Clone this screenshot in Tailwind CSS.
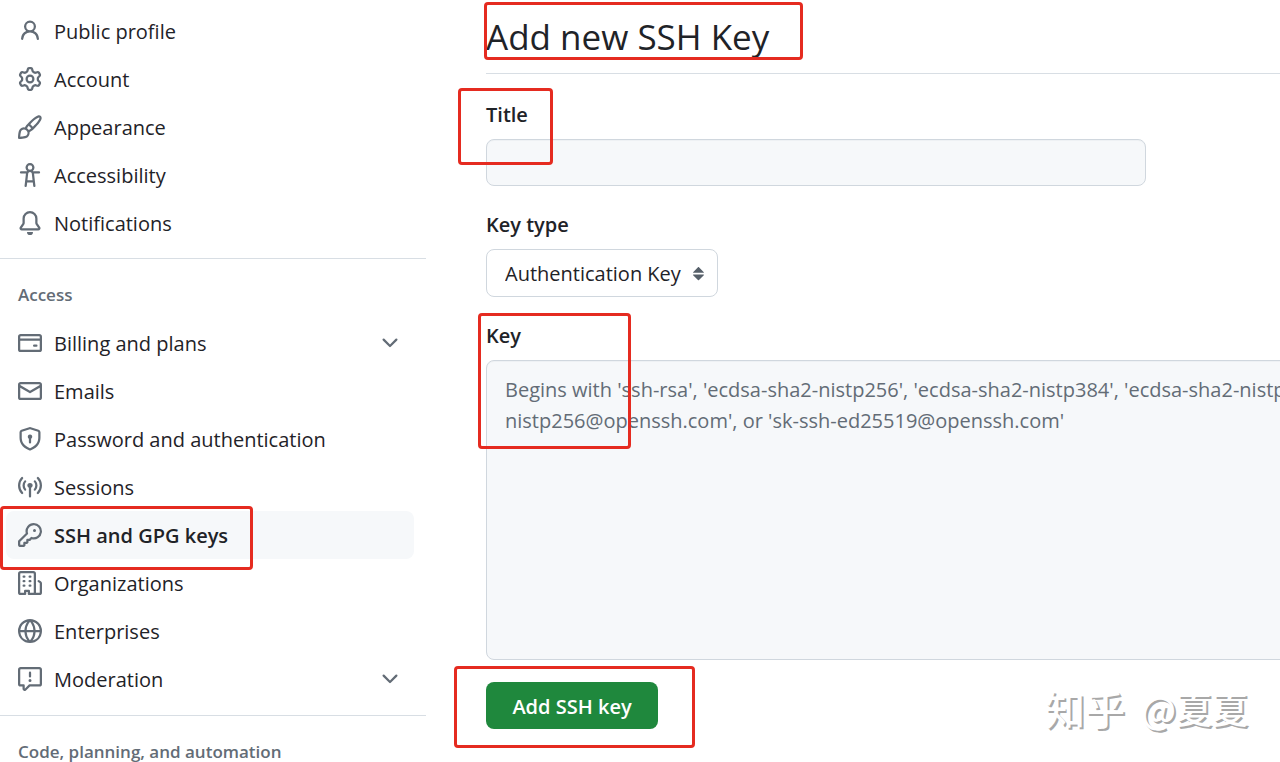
<!DOCTYPE html>
<html lang="en">
<head>
  <meta charset="UTF-8">
  <meta name="viewport" content="width=device-width, initial-scale=1.0">
  <title>Add new SSH Key</title>
  <script src="https://cdn.jsdelivr.net/npm/@tailwindcss/browser@4"></script>
</head>
<body class="bg-white font-['Open_Sans','Noto_Sans',sans-serif] text-[20px] leading-[30px] text-[#1f2328]">
  <div class="relative flex overflow-hidden">

    <!-- Settings sidebar -->
    <nav class="w-[426px] shrink-0 pt-[7px]" aria-label="Settings">
      <ul class="pl-1.5 pr-3">
        <li>
          <a href="#" class="flex h-12 items-center gap-3 rounded-lg px-3">
            <svg class="size-6 shrink-0 fill-[#636c76]" viewBox="0 0 16 16"><path d="M10.561 8.073a6.005 6.005 0 0 1 3.432 5.142.75.75 0 1 1-1.498.07 4.5 4.5 0 0 0-8.99 0 .75.75 0 0 1-1.498-.07 6.004 6.004 0 0 1 3.431-5.142 3.999 3.999 0 1 1 5.123 0ZM10.5 5a2.5 2.5 0 1 0-5 0 2.5 2.5 0 0 0 5 0Z"/></svg>
            <span class="pt-0.5">Public profile</span>
          </a>
        </li>
        <li>
          <a href="#" class="flex h-12 items-center gap-3 rounded-lg px-3">
            <svg class="size-6 shrink-0 fill-[#636c76]" viewBox="0 0 16 16"><path d="M8 0a8.2 8.2 0 0 1 .701.031C9.444.095 9.99.645 10.16 1.29l.288 1.107c.018.066.079.158.212.224.231.114.454.243.668.386.123.082.233.09.299.071l1.103-.303c.644-.176 1.392.021 1.82.63.27.385.506.792.704 1.218.315.675.111 1.422-.364 1.891l-.814.806c-.049.048-.098.147-.088.294.016.257.016.515 0 .772-.01.147.038.246.088.294l.814.806c.475.469.679 1.216.364 1.891a7.977 7.977 0 0 1-.704 1.217c-.428.61-1.176.807-1.82.63l-1.102-.302c-.067-.019-.177-.011-.3.071a5.909 5.909 0 0 1-.668.386c-.133.066-.194.158-.211.224l-.29 1.106c-.168.646-.715 1.196-1.458 1.26a8.006 8.006 0 0 1-1.402 0c-.743-.064-1.289-.614-1.458-1.26l-.289-1.106c-.018-.066-.079-.158-.212-.224a5.738 5.738 0 0 1-.668-.386c-.123-.082-.233-.09-.299-.071l-1.103.303c-.644.176-1.392-.021-1.82-.63a8.12 8.12 0 0 1-.704-1.218c-.315-.675-.111-1.422.363-1.891l.815-.806c.05-.048.098-.147.088-.294a6.214 6.214 0 0 1 0-.772c.01-.147-.038-.246-.088-.294l-.815-.806C.635 6.045.431 5.298.746 4.623a7.92 7.92 0 0 1 .704-1.217c.428-.61 1.176-.807 1.82-.63l1.102.302c.067.019.177.011.3-.071.214-.143.437-.272.668-.386.133-.066.194-.158.211-.224l.29-1.106C6.009.645 6.556.095 7.299.03 7.53.01 7.764 0 8 0Zm-.571 1.525c-.036.003-.108.036-.137.146l-.289 1.105c-.147.561-.549.967-.998 1.189-.173.086-.34.183-.5.29-.417.278-.97.423-1.529.27l-1.103-.303c-.109-.03-.175.016-.195.045-.22.312-.412.644-.573.99-.014.031-.021.11.059.19l.815.806c.411.406.562.957.53 1.456a4.709 4.709 0 0 0 0 .582c.032.499-.119 1.05-.53 1.456l-.815.806c-.081.08-.073.159-.059.19.162.346.353.677.573.989.02.03.085.076.195.046l1.102-.303c.56-.153 1.113-.008 1.53.27.161.107.328.204.501.29.447.222.85.629.997 1.189l.289 1.105c.029.109.101.143.137.146a6.6 6.6 0 0 0 1.142 0c.036-.003.108-.036.137-.146l.289-1.105c.147-.561.549-.967.998-1.189.173-.086.34-.183.5-.29.417-.278.97-.423 1.529-.27l1.103.303c.109.029.175-.016.195-.045.22-.313.411-.644.573-.99.014-.031.021-.11-.059-.19l-.815-.806c-.411-.406-.562-.957-.53-1.456a4.709 4.709 0 0 0 0-.582c-.032-.499.119-1.05.53-1.456l.815-.806c.081-.08.073-.159.059-.19a6.464 6.464 0 0 0-.573-.989c-.02-.03-.085-.076-.195-.046l-1.102.303c-.56.153-1.113.008-1.53-.27a4.44 4.44 0 0 0-.501-.29c-.447-.222-.85-.629-.997-1.189l-.289-1.105c-.029-.11-.101-.143-.137-.146a6.6 6.6 0 0 0-1.142 0ZM11 8a3 3 0 1 1-6 0 3 3 0 0 1 6 0ZM9.5 8a1.5 1.5 0 1 0-3.001.001A1.5 1.5 0 0 0 9.5 8Z"/></svg>
            <span class="pt-0.5">Account</span>
          </a>
        </li>
        <li>
          <a href="#" class="flex h-12 items-center gap-3 rounded-lg px-3">
            <svg class="size-6 shrink-0 fill-[#636c76]" viewBox="0 0 16 16"><path d="M11.134 1.535c.7-.509 1.416-.942 2.076-1.155.649-.21 1.463-.267 2.069.34.603.601.568 1.411.368 2.07-.202.668-.624 1.39-1.125 2.096-1.011 1.424-2.496 2.987-3.775 4.249-1.098 1.084-2.132 1.839-3.04 2.3a3.744 3.744 0 0 1-1.055 3.217c-.431.431-1.065.691-1.657.861-.614.177-1.294.287-1.914.357A21.151 21.151 0 0 1 .797 16H.743l.007-.75H.749L.742 16a.75.75 0 0 1-.743-.742l.743-.008-.742.007v-.054a21.25 21.25 0 0 1 .13-2.284c.067-.647.187-1.287.358-1.914.17-.591.43-1.226.86-1.657a3.746 3.746 0 0 1 3.227-1.054c.466-.893 1.225-1.907 2.314-2.982 1.271-1.255 2.833-2.75 4.246-3.777ZM1.62 13.089c-.051.464-.086.929-.104 1.395.466-.018.932-.053 1.396-.104a10.511 10.511 0 0 0 1.668-.309c.526-.151.856-.325 1.011-.48a2.25 2.25 0 1 0-3.182-3.182c-.155.155-.329.485-.48 1.01a10.515 10.515 0 0 0-.309 1.67Zm10.396-10.34c-1.224.89-2.605 2.189-3.822 3.384l1.718 1.718c1.21-1.205 2.51-2.597 3.387-3.833.47-.662.78-1.227.912-1.662.134-.444.032-.551.009-.575h-.001V1.78c-.014-.014-.113-.113-.548.027-.432.14-.995.462-1.655.942Zm-4.832 7.266-.001.001a9.859 9.859 0 0 0 1.63-1.142L7.155 7.216a9.7 9.7 0 0 0-1.161 1.607c.482.302.889.71 1.19 1.192Z"/></svg>
            <span class="pt-0.5">Appearance</span>
          </a>
        </li>
        <li>
          <a href="#" class="flex h-12 items-center gap-3 rounded-lg px-3">
            <svg class="size-6 shrink-0 fill-[#636c76]" viewBox="0 0 16 16"><path d="M9.923 5.302c.063.063.122.129.178.198H14A.75.75 0 0 1 14 7h-3.3l.578 5.163.362 2.997a.75.75 0 0 1-1.49.18L9.868 13H6.132l-.282 2.34a.75.75 0 0 1-1.49-.18l.362-2.997L5.3 7H2a.75.75 0 0 1 0-1.5h3.9a2.54 2.54 0 0 1 .176-.198 3 3 0 1 1 3.847 0ZM9.2 7.073h-.001a1.206 1.206 0 0 0-2.398 0L6.305 11.5h3.39ZM9.5 3a1.5 1.5 0 1 0-3.001.001A1.5 1.5 0 0 0 9.5 3Z"/></svg>
            <span class="pt-0.5">Accessibility</span>
          </a>
        </li>
        <li>
          <a href="#" class="flex h-12 items-center gap-3 rounded-lg px-3">
            <svg class="size-6 shrink-0 fill-[#636c76]" viewBox="0 0 16 16"><path d="M8 16a2 2 0 0 0 1.985-1.75c.017-.137-.097-.25-.235-.25h-3.5c-.138 0-.252.113-.235.25A2 2 0 0 0 8 16ZM3 5a5 5 0 0 1 10 0v2.947c0 .05.015.098.042.139l1.703 2.555A1.519 1.519 0 0 1 13.482 13H2.518a1.516 1.516 0 0 1-1.263-2.36l1.703-2.554A.255.255 0 0 0 3 7.947Zm5-3.5A3.5 3.5 0 0 0 4.5 5v2.947c0 .346-.102.683-.294.97l-1.703 2.556a.017.017 0 0 0-.003.01l.001.006c0 .002.002.004.004.006l.006.004.007.001h10.964l.007-.001.006-.004.004-.006.001-.007a.017.017 0 0 0-.003-.01l-1.703-2.554a1.745 1.745 0 0 1-.294-.97V5A3.5 3.5 0 0 0 8 1.5Z"/></svg>
            <span class="pt-0.5">Notifications</span>
          </a>
        </li>
      </ul>

      <hr class="mt-[11px] border-[#d8dee4]">

      <h2 class="px-[18px] pt-6 pb-3 text-[17px] leading-6 font-semibold text-[#636c76]">Access</h2>
      <ul class="pl-1.5 pr-3">
        <li>
          <button type="button" class="flex h-12 w-full items-center gap-3 rounded-lg px-3 text-left">
            <svg class="size-6 shrink-0 fill-[#636c76]" viewBox="0 0 16 16"><path d="M10.75 9a.75.75 0 0 0 0 1.5h1.5a.75.75 0 0 0 0-1.5h-1.5Z"/><path d="M0 3.75C0 2.784.784 2 1.75 2h12.5c.966 0 1.75.784 1.75 1.75v8.5A1.75 1.75 0 0 1 14.25 14H1.75A1.75 1.75 0 0 1 0 12.25ZM14.5 6.5h-13v5.75c0 .138.112.25.25.25h12.5a.25.25 0 0 0 .25-.25Zm0-2.75a.25.25 0 0 0-.25-.25H1.75a.25.25 0 0 0-.25.25V5h13Z"/></svg>
            <span class="grow pt-0.5">Billing and plans</span>
            <svg class="size-6 shrink-0 fill-[#636c76]" viewBox="0 0 16 16"><path d="M12.78 5.22a.749.749 0 0 1 0 1.06l-4.25 4.25a.749.749 0 0 1-1.06 0L3.22 6.28a.749.749 0 1 1 1.06-1.06L8 8.939l3.72-3.719a.749.749 0 0 1 1.06 0Z"/></svg>
          </button>
        </li>
        <li>
          <a href="#" class="flex h-12 items-center gap-3 rounded-lg px-3">
            <svg class="size-6 shrink-0 fill-[#636c76]" viewBox="0 0 16 16"><path d="M1.75 2h12.5c.966 0 1.75.784 1.75 1.75v8.5A1.75 1.75 0 0 1 14.25 14H1.75A1.75 1.75 0 0 1 0 12.25v-8.5C0 2.784.784 2 1.75 2ZM1.5 12.251c0 .138.112.25.25.25h12.5a.25.25 0 0 0 .25-.25V5.809L8.38 9.397a.75.75 0 0 1-.76 0L1.5 5.809v6.442Zm13-8.181v-.32a.25.25 0 0 0-.25-.25H1.75a.25.25 0 0 0-.25.25v.32L8 7.88Z"/></svg>
            <span class="pt-0.5">Emails</span>
          </a>
        </li>
        <li>
          <a href="#" class="flex h-12 items-center gap-3 rounded-lg px-3">
            <svg class="size-6 shrink-0 fill-[#636c76]" viewBox="0 0 16 16"><path d="m8.533.133 5.25 1.68A1.75 1.75 0 0 1 15 3.48V7c0 1.566-.32 3.182-1.303 4.682-.983 1.498-2.585 2.813-5.032 3.855a1.697 1.697 0 0 1-1.33 0c-2.447-1.042-4.049-2.357-5.032-3.855C1.32 10.182 1 8.566 1 7V3.48a1.755 1.755 0 0 1 1.217-1.667l5.25-1.68a1.748 1.748 0 0 1 1.066 0Zm-.61 1.429.001.001-5.25 1.68a.251.251 0 0 0-.174.237V7c0 1.36.275 2.666 1.057 3.859.784 1.194 2.121 2.342 4.366 3.298a.196.196 0 0 0 .154 0c2.245-.957 3.582-2.103 4.366-3.297C13.225 9.666 13.5 8.358 13.5 7V3.48a.25.25 0 0 0-.174-.238l-5.25-1.68a.25.25 0 0 0-.153 0ZM9.5 6.5c0 .536-.286 1.032-.75 1.3v2.45a.75.75 0 0 1-1.5 0V7.8A1.5 1.5 0 1 1 9.5 6.5Z"/></svg>
            <span class="pt-0.5">Password and authentication</span>
          </a>
        </li>
        <li>
          <a href="#" class="flex h-12 items-center gap-3 rounded-lg px-3">
            <svg class="size-6 shrink-0 fill-[#636c76]" viewBox="0 0 16 16"><path d="M8.75 8.582v5.668a.75.75 0 0 1-1.5 0V8.582a1.75 1.75 0 1 1 1.5 0Zm3.983-7.125a.75.75 0 0 1 1.06.026A7.976 7.976 0 0 1 16 7c0 2.139-.84 4.083-2.207 5.517a.75.75 0 1 1-1.086-1.034A6.474 6.474 0 0 0 14.5 7a6.474 6.474 0 0 0-1.793-4.483.75.75 0 0 1 .026-1.06Zm-9.466 0c.3.286.312.76.026 1.06A6.474 6.474 0 0 0 1.5 7a6.47 6.47 0 0 0 1.793 4.483.75.75 0 0 1-1.086 1.034A7.973 7.973 0 0 1 0 7c0-2.139.84-4.083 2.207-5.517a.75.75 0 0 1 1.06-.026Zm8.556 2.321A4.988 4.988 0 0 1 13 7a4.988 4.988 0 0 1-1.177 3.222.75.75 0 1 1-1.146-.967A3.487 3.487 0 0 0 11.5 7c0-.86-.309-1.645-.823-2.255a.75.75 0 0 1 1.146-.967Zm-6.492.958A3.48 3.48 0 0 0 4.5 7a3.48 3.48 0 0 0 .823 2.255.75.75 0 0 1-1.146.967A4.981 4.981 0 0 1 3 7a4.982 4.982 0 0 1 1.188-3.236.75.75 0 1 1 1.143.972Z"/></svg>
            <span class="pt-0.5">Sessions</span>
          </a>
        </li>
        <li class="relative">
          <a href="#" aria-current="page" class="flex h-12 items-center gap-3 rounded-lg bg-[#f6f8fa] px-3 font-semibold">
            <svg class="size-6 shrink-0 fill-[#636c76]" viewBox="0 0 16 16"><path d="M10.5 0a5.499 5.499 0 1 1-1.288 10.848l-.932.932a.749.749 0 0 1-.53.22H7v.75a.749.749 0 0 1-.22.53l-.5.5a.749.749 0 0 1-.53.22H5v.75a.749.749 0 0 1-.22.53l-.5.5a.749.749 0 0 1-.53.22h-2A1.75 1.75 0 0 1 0 14.25v-2c0-.199.079-.389.22-.53l4.932-4.932A5.5 5.5 0 0 1 10.5 0Zm-4 5.5c-.001.431.069.86.205 1.269a.75.75 0 0 1-.181.768L1.5 12.56v1.69c0 .138.112.25.25.25h1.69l.06-.06v-1.19a.75.75 0 0 1 .75-.75h1.19l.06-.06v-1.19a.75.75 0 0 1 .75-.75h1.19l1.023-1.025a.75.75 0 0 1 .768-.18A4 4 0 1 0 6.5 5.5ZM11 6a1 1 0 1 1 0-2 1 1 0 0 1 0 2Z"/></svg>
            <span class="pt-0.5">SSH and GPG keys</span>
          </a>
          <div class="pointer-events-none absolute -top-[5px] -left-1.5 z-10 h-16 w-[253px] rounded-sm border-3 border-[#e52b20]"></div>
        </li>
        <li>
          <a href="#" class="flex h-12 items-center gap-3 rounded-lg px-3">
            <svg class="size-6 shrink-0 fill-[#636c76]" viewBox="0 0 16 16"><path d="M1.75 16A1.75 1.75 0 0 1 0 14.25V1.75C0 .784.784 0 1.75 0h8.5C11.216 0 12 .784 12 1.75v12.5c0 .085-.006.168-.018.25h2.268a.25.25 0 0 0 .25-.25V8.285a.25.25 0 0 0-.111-.208l-1.055-.703a.749.749 0 1 1 .832-1.248l1.055.703c.487.325.779.871.779 1.456v5.965A1.75 1.75 0 0 1 14.25 16h-3.5a.766.766 0 0 1-.197-.026c-.099.017-.2.026-.303.026h-3a.75.75 0 0 1-.75-.75V14h-1v1.25a.75.75 0 0 1-.75.75Zm-.25-1.75c0 .138.112.25.25.25H4v-1.25a.75.75 0 0 1 .75-.75h2.5a.75.75 0 0 1 .75.75v1.25h2.25a.25.25 0 0 0 .25-.25V1.75a.25.25 0 0 0-.25-.25h-8.5a.25.25 0 0 0-.25.25ZM3.75 6h.5a.75.75 0 0 1 0 1.5h-.5a.75.75 0 0 1 0-1.5ZM3 3.75A.75.75 0 0 1 3.75 3h.5a.75.75 0 0 1 0 1.5h-.5A.75.75 0 0 1 3 3.75Zm4 3A.75.75 0 0 1 7.75 6h.5a.75.75 0 0 1 0 1.5h-.5A.75.75 0 0 1 7 6.75ZM7.75 3h.5a.75.75 0 0 1 0 1.5h-.5a.75.75 0 0 1 0-1.5ZM3 9.75A.75.75 0 0 1 3.75 9h.5a.75.75 0 0 1 0 1.5h-.5A.75.75 0 0 1 3 9.75ZM7.75 9h.5a.75.75 0 0 1 0 1.5h-.5a.75.75 0 0 1 0-1.5Z"/></svg>
            <span class="pt-0.5">Organizations</span>
          </a>
        </li>
        <li>
          <a href="#" class="flex h-12 items-center gap-3 rounded-lg px-3">
            <svg class="size-6 shrink-0 fill-[#636c76]" viewBox="0 0 16 16"><path d="M8 0a8 8 0 1 1 0 16A8 8 0 0 1 8 0ZM5.78 8.75a9.64 9.64 0 0 0 1.363 4.177c.255.426.542.832.857 1.215.245-.296.551-.705.857-1.215A9.64 9.64 0 0 0 10.22 8.75Zm4.44-1.5a9.64 9.64 0 0 0-1.363-4.177c-.307-.51-.612-.919-.857-1.215a9.927 9.927 0 0 0-.857 1.215A9.64 9.64 0 0 0 5.78 7.25Zm-5.944 1.5H1.543a6.507 6.507 0 0 0 4.666 5.5c-.123-.181-.24-.365-.352-.552-.715-1.192-1.437-2.874-1.581-4.948Zm-2.733-1.5h2.733c.144-2.074.866-3.756 1.58-4.948.12-.197.237-.381.353-.552a6.507 6.507 0 0 0-4.666 5.5Zm10.181 1.5c-.144 2.074-.866 3.756-1.58 4.948-.12.197-.237.381-.353.552a6.507 6.507 0 0 0 4.666-5.5Zm2.733-1.5a6.507 6.507 0 0 0-4.666-5.5c.123.181.24.365.353.552.714 1.192 1.436 2.874 1.58 4.948Z"/></svg>
            <span class="pt-0.5">Enterprises</span>
          </a>
        </li>
        <li>
          <button type="button" class="flex h-12 w-full items-center gap-3 rounded-lg px-3 text-left">
            <svg class="size-6 shrink-0 fill-[#636c76]" viewBox="0 0 16 16"><path d="M0 1.75C0 .784.784 0 1.75 0h12.5C15.216 0 16 .784 16 1.75v9.5A1.75 1.75 0 0 1 14.25 13H8.06l-2.573 2.573A1.458 1.458 0 0 1 3 14.543V13H1.75A1.75 1.75 0 0 1 0 11.25Zm1.75-.25a.25.25 0 0 0-.25.25v9.5c0 .138.112.25.25.25h2a.75.75 0 0 1 .75.75v2.19l2.72-2.72a.749.749 0 0 1 .53-.22h6.5a.25.25 0 0 0 .25-.25v-9.5a.25.25 0 0 0-.25-.25Zm7 2.25v2.5a.75.75 0 0 1-1.5 0v-2.5a.75.75 0 0 1 1.5 0ZM9 9a1 1 0 1 1-2 0 1 1 0 0 1 2 0Z"/></svg>
            <span class="grow pt-0.5">Moderation</span>
            <svg class="size-6 shrink-0 fill-[#636c76]" viewBox="0 0 16 16"><path d="M12.78 5.22a.749.749 0 0 1 0 1.06l-4.25 4.25a.749.749 0 0 1-1.06 0L3.22 6.28a.749.749 0 1 1 1.06-1.06L8 8.939l3.72-3.719a.749.749 0 0 1 1.06 0Z"/></svg>
          </button>
        </li>
      </ul>

      <hr class="mt-3 border-[#d8dee4]">

      <h2 class="px-[18px] pt-6 text-[17px] leading-6 font-semibold text-[#636c76]">Code, planning, and automation</h2>
    </nav>

    <!-- New key form -->
    <main class="min-w-0 grow pl-[60px]">
      <div class="relative border-b border-[#d8dee4] py-3">
        <h1 class="text-[35px] leading-[49px]">Add new SSH Key</h1>
        <div class="pointer-events-none absolute top-[2px] -left-[2px] h-[58px] w-[319px] rounded-sm border-3 border-[#e52b20]"></div>
      </div>

      <form class="pt-[26px]">
        <div class="relative">
          <label for="key-title" class="block font-semibold">Title</label>
          <input id="key-title" type="text" class="mt-[9px] block h-[47px] w-[660px] rounded-lg border border-[#d0d7de] bg-[#f6f8fa] px-[18px] shadow-[inset_0_1px_0_rgba(208,215,222,0.2)]">
          <div class="pointer-events-none absolute -top-3 -left-7 h-[77px] w-[95px] rounded-sm border-3 border-[#e52b20]"></div>
        </div>

        <div class="mt-6">
          <label for="key-type" class="block font-semibold">Key type</label>
          <div class="relative mt-[9px] w-[232px]">
            <select id="key-type" class="block h-12 w-full appearance-none rounded-lg border border-[#d0d7de] bg-white pt-0.5 pl-[18px]">
              <option>Authentication Key</option>
              <option>Signing Key</option>
            </select>
            <svg class="pointer-events-none absolute top-3 right-[7px] size-6 fill-[#57606a]" viewBox="0 0 16 16"><path d="m4.074 9.427 3.396 3.396a.25.25 0 0 0 .354 0l3.396-3.396A.25.25 0 0 0 11.043 9H4.251a.25.25 0 0 0-.177.427ZM4.074 7.47 7.47 4.073a.25.25 0 0 1 .354 0L11.22 7.47a.25.25 0 0 1-.177.426H4.251a.25.25 0 0 1-.177-.426Z"/></svg>
          </div>
        </div>

        <div class="relative mt-6">
          <label for="key-body" class="block font-semibold">Key</label>
          <textarea id="key-body" class="mt-[9px] block h-[300px] w-[1176px] resize-none rounded-lg border border-[#d0d7de] bg-[#f6f8fa] px-[18px] py-[13px] leading-[31px] shadow-[inset_0_1px_0_rgba(208,215,222,0.2)] placeholder:text-[#636c76]" placeholder="Begins with 'ssh-rsa', 'ecdsa-sha2-nistp256', 'ecdsa-sha2-nistp384', 'ecdsa-sha2-nistp521', 'ssh-ed25519', 'sk-ecdsa-sha2-nistp256@openssh.com', or 'sk-ssh-ed25519@openssh.com'"></textarea>
          <div class="pointer-events-none absolute -top-2 -left-2 h-[136px] w-[153px] rounded-sm border-3 border-[#e52b20]"></div>
        </div>

        <div class="relative mt-[22px]">
          <button type="submit" class="block h-[47px] w-[172px] rounded-lg bg-[#1f883d] pt-0.5 font-semibold text-white">Add SSH key</button>
          <div class="pointer-events-none absolute -top-4 -left-8 h-[82px] w-[241px] rounded-sm border-3 border-[#e52b20]"></div>
        </div>
      </form>
    </main>

    <!-- Watermark -->
    <div class="absolute right-8 bottom-8 flex items-center gap-4 font-['Noto_Sans_CJK_SC',sans-serif] text-[36px] leading-[48px] font-medium text-white [text-shadow:2px_2px_0_#a8a8a8]">
      <span class="text-[40px]">知乎</span>
      <span>@夏夏</span>
    </div>
  </div>
</body>
</html>
